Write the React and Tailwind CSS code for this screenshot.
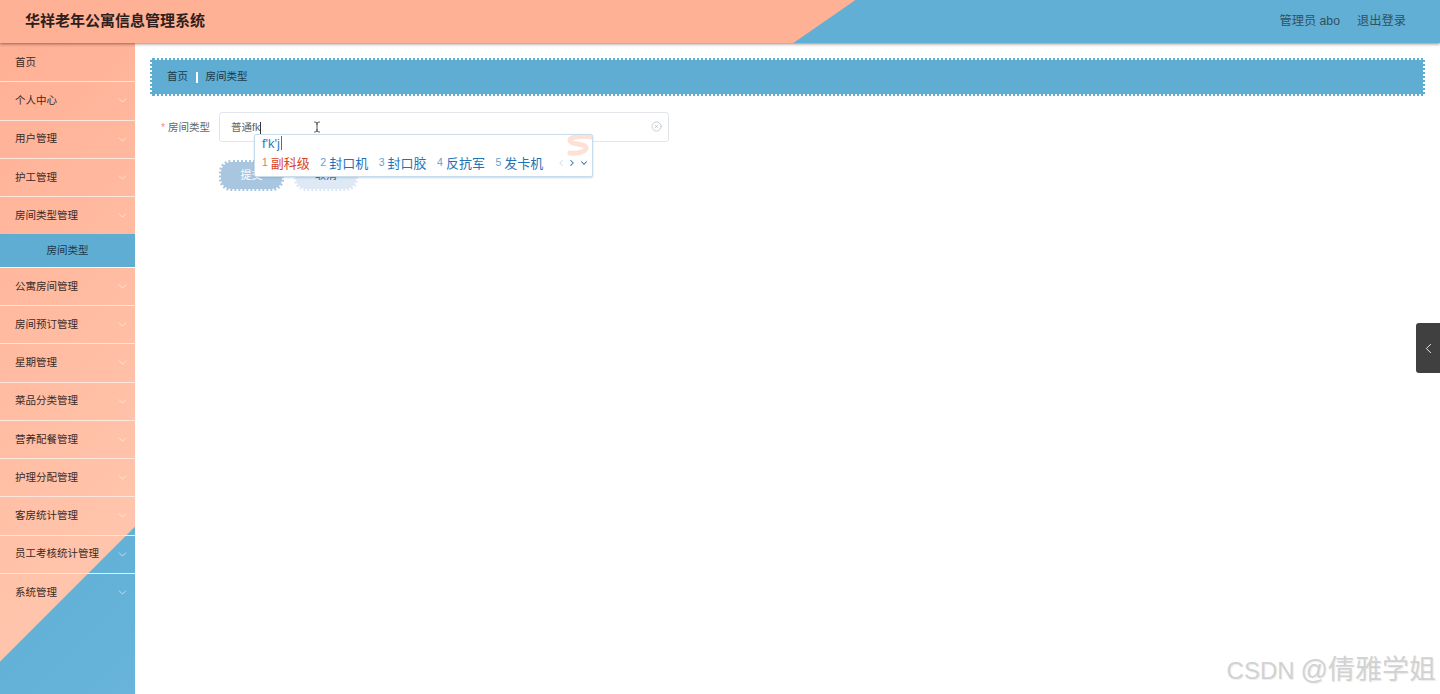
import React from "react";
import { ChevronDown, ChevronLeft, ChevronRight, CircleX, TextCursor } from "lucide-react";

const cjk = "font-['Liberation_Sans','Noto_Sans_CJK_SC',sans-serif]";

const menus = [
    { label: "首页", plain: true },
    { label: "个人中心" },
    { label: "用户管理" },
    { label: "护工管理" },
    { label: "房间类型管理", children: ["房间类型"] },
    { label: "公寓房间管理" },
    { label: "房间预订管理" },
    { label: "星期管理" },
    { label: "菜品分类管理" },
    { label: "营养配餐管理" },
    { label: "护理分配管理" },
    { label: "客房统计管理" },
    { label: "员工考核统计管理" },
    { label: "系统管理", last: true },
];

const candidates = [
    { n: 1, word: "副科级", active: true },
    { n: 2, word: "封口机" },
    { n: 3, word: "封口胶" },
    { n: 4, word: "反抗军" },
    { n: 5, word: "发卡机" },
];

function Sidebar() {
    return (
        <aside className="w-[135px] shrink-0 bg-[linear-gradient(135deg,#ffb095_0%,#ffc5ac_78.6%,#63b1d7_78.8%,#68b4da_100%)] pt-[1px]">
            {menus.map((menu) => (
                <div key={menu.label}>
                    <div className={`flex h-[38.25px] items-center justify-between pl-[15px] pr-[6px] text-[10.5px] text-[#3a2a26] ${menu.last ? "" : "border-b border-[#ffe6da]"}`}>
                        <span>{menu.label}</span>
                        {!menu.plain && <ChevronDown size={13} strokeWidth={1.5} className="text-white/70" />}
                    </div>
                    {menu.children && menu.children.map((child) => (
                        <div key={child} className="-mt-[1px] flex h-[33.5px] items-center justify-center border-b border-white bg-[#5fadd3] text-[10.5px] text-[#1d3a4c]">
                            {child}
                        </div>
                    ))}
                </div>
            ))}
        </aside>
    );
}

function ImePopup() {
    return (
        <div className="absolute left-[34px] top-[21px] z-10 h-[43px] w-[339px] overflow-hidden rounded-[2px] border border-[#c9dcec] bg-white shadow-[0_1px_2px_rgba(90,140,190,0.35)]">
            <svg className="absolute right-0 top-0 opacity-35" width="30" height="22" viewBox="0 0 30 22" fill="none">
                <path d="M30 2 C18 0 7 2 8 6 C9 10 24 8 24 13 C24 17 14 19 8 18" stroke="#f9a88c" strokeWidth="5" strokeLinecap="round" />
            </svg>
            <div className="relative flex h-[16px] items-center pl-[7px] text-[13px] leading-none text-[#2a7cc0]">
                f'k'j
                <span className="ml-[1px] h-[14px] w-[1px] bg-[#2a7cc0]" />
            </div>
            <div className="relative mt-[2px] flex h-[20px] items-center pl-[7px]">
                {candidates.map((c) => (
                    <span key={c.n} className={`mr-[10.5px] flex items-center gap-[3px] ${c.active ? "text-[#d8452a]" : "text-[#1f74b8]"}`}>
                        <span className={`text-[10.5px] ${c.active ? "text-[#e8735c]" : "text-[#5f9fd2]"}`}>{c.n}</span>
                        <span className="text-[13px] leading-none">{c.word}</span>
                    </span>
                ))}
                <span className="ml-[2px] flex items-center text-[#1f74b8]">
                    <ChevronLeft size={10} className="text-[#b4d0e8]" />
                    <ChevronRight size={10} strokeWidth={2.5} className="ml-[1px]" />
                    <ChevronDown size={10} strokeWidth={2.5} className="ml-[2px]" />
                </span>
            </div>
        </div>
    );
}

export default function App() {
    return (
        <div className={`relative flex h-[694px] w-full flex-col overflow-hidden bg-white ${cjk}`}>
            <header className="relative z-20 flex h-[43px] shrink-0 items-center justify-between bg-[linear-gradient(145.3deg,#ffb196_56.9%,#61afd5_57%)] pl-[25px] pr-[34px] shadow-[0_1px_3px_rgba(60,30,20,0.55)]">
                <h1 className="text-[15px] font-bold text-[#2d201c]">华祥老年公寓信息管理系统</h1>
                <div className="flex items-center gap-[17px] text-[12.25px] text-[#33505f]">
                    <span>管理员 abo</span>
                    <span>退出登录</span>
                </div>
            </header>

            <div className="flex flex-1">
                <Sidebar />
                <main className="flex-1 px-[15px] pt-[15px]">
                    <div className="flex h-[38px] items-center rounded-[2px] border-2 border-dotted border-white bg-[#5fadd3] pl-[15px] text-[10.5px] text-[#1d3a4c]">
                        <span>首页</span>
                        <span className="mx-[8px] h-[11px] w-[1.5px] bg-white" />
                        <span>房间类型</span>
                    </div>

                    <div className="ml-[1px] mt-[16px] flex items-center">
                        <label className="w-[59px] pt-[1px] text-right text-[10.5px] text-[#666666]">
                            <span className="mr-[3px] text-[#f78f7a]">*</span>房间类型
                        </label>
                        <div className="relative ml-[9px] flex h-[30px] w-[450px] items-center rounded-[3px] border border-[#e2e5ea] pl-[11px] pt-[1px] text-[10.5px] text-[#606266]">
                            <span>普通fk</span>
                            <span className="h-[12px] w-[1px] bg-[#333333]" />
                            <TextCursor size={12} strokeWidth={1.5} className="absolute left-[91px] top-[8px] text-[#222222]" />
                            <CircleX size={11} strokeWidth={1.5} className="absolute right-[6px] top-[8px] text-[#b5b9bf]" />
                            <ImePopup />
                        </div>
                    </div>

                    <div className="ml-[69px] mt-[18px] flex gap-[10px]">
                        <button className="h-[31px] w-[65px] rounded-[12px] border-2 border-dotted border-white bg-[#a9c6e0] text-[11px] text-white">提交</button>
                        <button className="h-[31px] w-[64px] rounded-[12px] border-2 border-dotted border-white bg-[#dfe9f5] text-[11px] text-[#555555]">取消</button>
                    </div>
                </main>
            </div>

            <div className="absolute right-0 top-[323px] flex h-[50px] w-[24px] items-center justify-center rounded-l-[3px] bg-[#404040]">
                <ChevronLeft size={17} strokeWidth={1.25} className="text-white" />
            </div>

            <div className="absolute bottom-[10px] right-[4px] flex items-baseline gap-[6px] leading-none text-[#d2d2d2] [text-shadow:1px_1px_1px_#ececec]">
                <span className="text-[24px]">CSDN</span>
                <span className="text-[27px]">@倩雅学姐</span>
            </div>
        </div>
    );
}
